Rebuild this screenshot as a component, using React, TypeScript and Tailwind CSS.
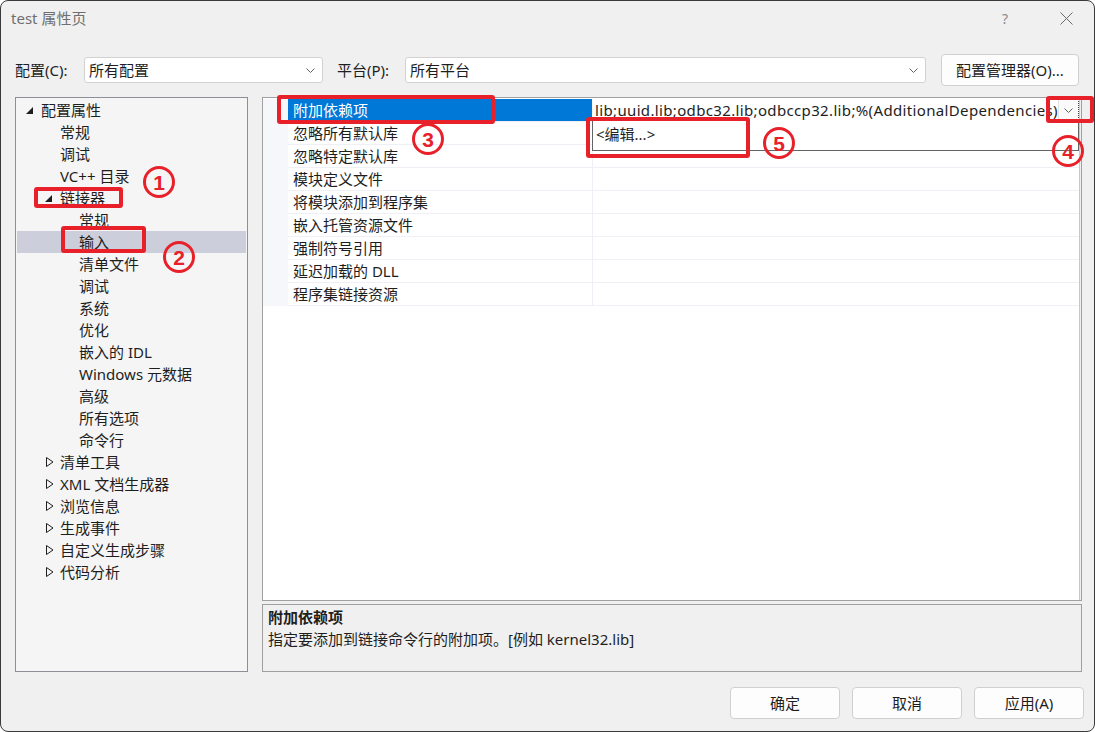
import React from "react";

type TreeItem = {
  label: string;
  level: 0 | 1 | 2;
  arrow?: "open" | "closed";
  selected?: boolean;
};

const tree: TreeItem[] = [
  { label: "配置属性", level: 0, arrow: "open" },
  { label: "常规", level: 1 },
  { label: "调试", level: 1 },
  { label: "VC++ 目录", level: 1 },
  { label: "链接器", level: 1, arrow: "open" },
  { label: "常规", level: 2 },
  { label: "输入", level: 2, selected: true },
  { label: "清单文件", level: 2 },
  { label: "调试", level: 2 },
  { label: "系统", level: 2 },
  { label: "优化", level: 2 },
  { label: "嵌入的 IDL", level: 2 },
  { label: "Windows 元数据", level: 2 },
  { label: "高级", level: 2 },
  { label: "所有选项", level: 2 },
  { label: "命令行", level: 2 },
  { label: "清单工具", level: 1, arrow: "closed" },
  { label: "XML 文档生成器", level: 1, arrow: "closed" },
  { label: "浏览信息", level: 1, arrow: "closed" },
  { label: "生成事件", level: 1, arrow: "closed" },
  { label: "自定义生成步骤", level: 1, arrow: "closed" },
  { label: "代码分析", level: 1, arrow: "closed" },
];

const indent = { 0: "pl-[7px]", 1: "pl-[26px]", 2: "pl-[45px]" };

const props = [
  "附加依赖项",
  "忽略所有默认库",
  "忽略特定默认库",
  "模块定义文件",
  "将模块添加到程序集",
  "嵌入托管资源文件",
  "强制符号引用",
  "延迟加载的 DLL",
  "程序集链接资源",
];

function Chevron() {
  return (
    <svg width="9" height="5" viewBox="0 0 9 5">
      <path d="M0.5 0.5L4.5 4.5L8.5 0.5" fill="none" stroke="#5f5f5f" strokeWidth="1" />
    </svg>
  );
}

function Arrow({ kind }: { kind?: "open" | "closed" }) {
  if (kind === "open")
    return (
      <svg width="7" height="7" viewBox="0 0 7 7" className="ml-[2px]">
        <polygon points="7,0 7,7 0,7" fill="#1e1e1e" />
      </svg>
    );
  if (kind === "closed")
    return (
      <svg width="8" height="10" viewBox="0 0 8 10" className="ml-[3px]">
        <polygon points="0.5,0.5 7,5 0.5,9.5" fill="none" stroke="#1e1e1e" strokeWidth="1" />
      </svg>
    );
  return null;
}

function RedBox({ className }: { className: string }) {
  return <div className={`absolute z-20 border-[4px] border-[#e8202a] rounded-[3px] ${className}`} />;
}

function Badge({ n, className }: { n: string; className: string }) {
  return (
    <div
      className={`absolute z-20 w-[32px] h-[32px] rounded-full border-[3px] border-[#e8202a] flex items-center justify-center text-[#e8202a] font-bold text-[21px] leading-none font-['Liberation_Sans',sans-serif] ${className}`}
    >
      {n}
    </div>
  );
}

export default function App() {
  return (
    <div className="relative w-[1095px] h-[732px] bg-[#f0f0f0] border border-[#3a3a3a] rounded-[8px] overflow-hidden text-[15px] text-[#1e1e1e] font-['Noto_Sans','Noto_Sans_CJK_SC',sans-serif]">
      {/* title bar */}
      <div className="h-[35px] flex items-center pl-[10px] pr-[21px] text-[#6f6f6f]">
        <span>test 属性页</span>
        <span className="ml-auto text-[14px] text-[#8a8a8a]">?</span>
        <svg width="13" height="13" viewBox="0 0 13 13" className="ml-[52px]">
          <path d="M0.5 0.5L12.5 12.5M12.5 0.5L0.5 12.5" stroke="#6a6a6a" strokeWidth="1" />
        </svg>
      </div>

      {/* config row */}
      <div className="mt-[18px] h-[32px] flex items-center pl-[14px]">
        <span className="w-[69px]">配置(C):</span>
        <div className="w-[239px] h-[26px] bg-white border border-[#d2d2d2] rounded-[3px] flex items-center justify-between pl-[4px] pr-[7px]">
          <span>所有配置</span>
          <Chevron />
        </div>
        <span className="ml-[14px] w-[68px]">平台(P):</span>
        <div className="w-[521px] h-[26px] bg-white border border-[#d2d2d2] rounded-[3px] flex items-center justify-between pl-[4px] pr-[7px]">
          <span>所有平台</span>
          <Chevron />
        </div>
        <button className="ml-[15px] w-[138px] h-[32px] bg-[#fdfdfd] border border-[#d0d0d0] rounded-[4px]">
          配置管理器(O)...
        </button>
      </div>

      {/* main */}
      <div className="mt-[11px] h-[575px] flex pl-[14px] gap-[14px]">
        {/* tree */}
        <div className="w-[233px] h-full bg-[#f5f5f5] border border-[#8d8e98] pt-px px-px">
          {tree.map((t, i) => (
            <div
              key={i}
              className={`h-[22px] flex items-center ${indent[t.level]} ${t.selected ? "bg-[#cccedb]" : ""}`}
            >
              <span className="w-[17px] flex items-center">
                <Arrow kind={t.arrow} />
              </span>
              <span className="leading-[22px] whitespace-nowrap">{t.label}</span>
            </div>
          ))}
        </div>

        {/* right */}
        <div className="w-[820px] h-full flex flex-col">
          <div className="h-[504px] bg-white border border-[#a0a0a0] pt-px flex">
            <div className="flex-1">
              {props.map((p, i) => (
                <div key={i} className="h-[23px] flex">
                  <div className="w-[25px] bg-[#f5f7fb]" />
                  <div
                    className={`w-[304px] pl-[5px] leading-[22px] border-b border-[#eef0f5] whitespace-nowrap ${
                      i === 0 ? "bg-[#0078d7] text-white" : ""
                    }`}
                  >
                    {p}
                  </div>
                  {i === 0 ? (
                    <div className="relative flex-1 flex border-l border-[#eef0f5] border-b border-r border-dotted border-b-[#444] border-r-[#444]">
                      <div className="flex-1 pl-[2px] leading-[22px] whitespace-nowrap overflow-hidden tracking-[0.35px]">
                        lib;uuid.lib;odbc32.lib;odbccp32.lib;%(AdditionalDependencies)
                      </div>
                      <div className="w-[20px] flex items-center justify-center border-l border-solid border-l-[#e2e2e2] bg-[#fafafa]">
                        <Chevron />
                      </div>
                      <div className="absolute top-full left-[-1px] right-[-1px] h-[30px] bg-white border border-t-0 border-solid border-[#646464] pl-[3px] leading-[26px] z-10 text-[#1e1e1e]">
                        &lt;编辑...&gt;
                      </div>
                    </div>
                  ) : (
                    <div className="flex-1 border-l border-b border-[#eef0f5]" />
                  )}
                </div>
              ))}
            </div>
            <div className="w-[2px] bg-[#f0f0f0] border-l border-[#c8c8c8]" />
          </div>
          <div className="mt-[3px] h-[68px] bg-[#f0f0f0] border border-[#a0a0a0] pt-px pl-[5px] leading-[22px]">
            <div className="font-bold">附加依赖项</div>
            <div>指定要添加到链接命令行的附加项。[例如 kernel32.lib]</div>
          </div>
        </div>
      </div>

      {/* buttons */}
      <div className="mt-[15px] h-[32px] flex justify-end gap-[12px] pr-[10px]">
        <button className="w-[110px] h-[32px] bg-[#fdfdfd] border border-[#d0d0d0] rounded-[4px]">确定</button>
        <button className="w-[110px] h-[32px] bg-[#fdfdfd] border border-[#d0d0d0] rounded-[4px]">取消</button>
        <button className="w-[110px] h-[32px] bg-[#fdfdfd] border border-[#d0d0d0] rounded-[4px]">应用(A)</button>
      </div>

      {/* annotations */}
      <RedBox className="left-[33px] top-[186px] w-[89px] h-[21px]" />
      <RedBox className="left-[60px] top-[225px] w-[85px] h-[27px]" />
      <RedBox className="left-[276px] top-[94px] w-[218px] h-[29px]" />
      <RedBox className="left-[1045px] top-[95px] w-[48px] h-[27px]" />
      <RedBox className="left-[585px] top-[116px] w-[164px] h-[41px]" />
      <Badge n="1" className="left-[142px] top-[165px]" />
      <Badge n="2" className="left-[162px] top-[240px]" />
      <Badge n="3" className="left-[411px] top-[122px]" />
      <Badge n="4" className="left-[1051px] top-[134px]" />
      <Badge n="5" className="left-[762px] top-[126px]" />
    </div>
  );
}
